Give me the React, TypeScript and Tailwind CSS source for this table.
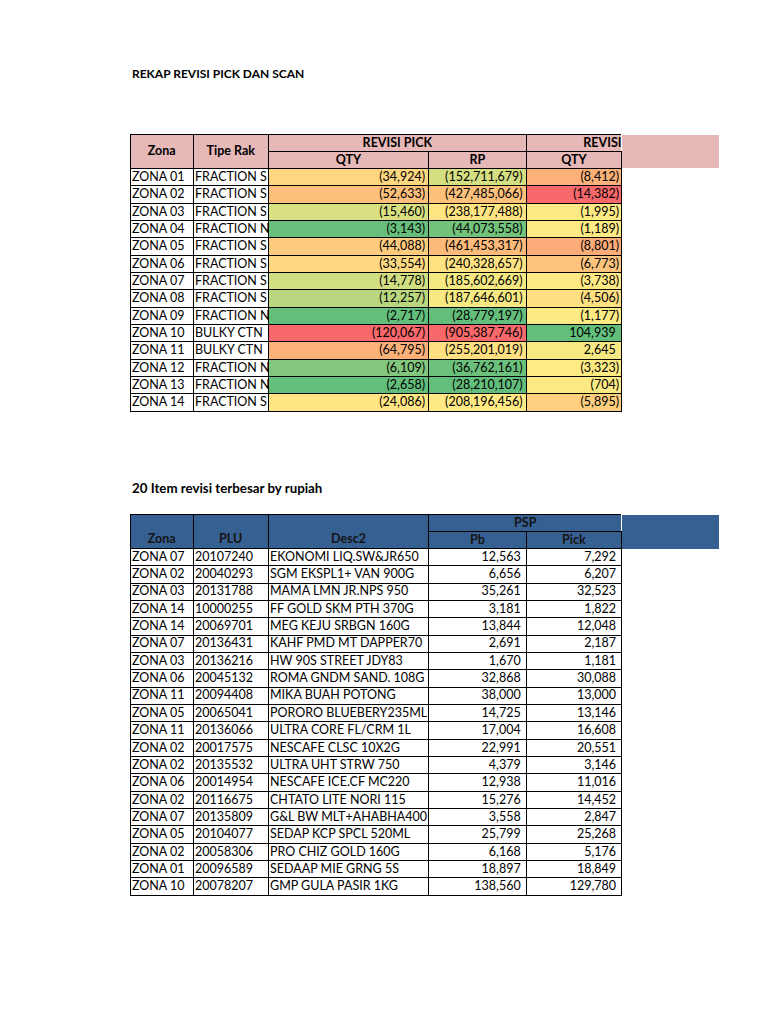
import type { CSSProperties } from 'react';

type RGB = [number, number, number];

const RED: RGB = [248, 105, 107];
const YELLOW: RGB = [255, 235, 132];
const GREEN: RGB = [99, 190, 123];

// skala warna 3 titik ala Excel (min merah, median kuning, max hijau)
function colorScale(values: number[]) {
  const sorted = [...values].sort((a, b) => a - b);
  const pos = (sorted.length - 1) * 0.5;
  const lo = Math.floor(pos);
  const hi = Math.ceil(pos);
  const mid = sorted[lo] + (sorted[hi] - sorted[lo]) * (pos - lo);
  const min = sorted[0];
  const max = sorted[sorted.length - 1];

  return (v: number): CSSProperties => {
    let a = RED;
    let b = YELLOW;
    let t = (v - min) / (mid - min);
    if (v > mid) {
      a = YELLOW;
      b = GREEN;
      t = (v - mid) / (max - mid);
    }
    const c = a.map((x, i) => Math.round(x + (b[i] - x) * t));
    return { backgroundColor: `rgb(${c[0]}, ${c[1]}, ${c[2]})` };
  };
}

const fmt = (n: number) => Math.abs(n).toLocaleString('en-US');

function Acc({ value }: { value: number }) {
  if (value < 0) return <>({fmt(value)})</>;
  return (
    <>
      {fmt(value)}
      <span className="invisible">)</span>
    </>
  );
}

const rekap: { zona: string; rak: string; qty: number; rp: number; scan: number }[] = [
  { zona: 'ZONA 01', rak: 'FRACTION S', qty: -34924, rp: -152711679, scan: -8412 },
  { zona: 'ZONA 02', rak: 'FRACTION S', qty: -52633, rp: -427485066, scan: -14382 },
  { zona: 'ZONA 03', rak: 'FRACTION S', qty: -15460, rp: -238177488, scan: -1995 },
  { zona: 'ZONA 04', rak: 'FRACTION N', qty: -3143, rp: -44073558, scan: -1189 },
  { zona: 'ZONA 05', rak: 'FRACTION S', qty: -44088, rp: -461453317, scan: -8801 },
  { zona: 'ZONA 06', rak: 'FRACTION S', qty: -33554, rp: -240328657, scan: -6773 },
  { zona: 'ZONA 07', rak: 'FRACTION S', qty: -14778, rp: -185602669, scan: -3738 },
  { zona: 'ZONA 08', rak: 'FRACTION S', qty: -12257, rp: -187646601, scan: -4506 },
  { zona: 'ZONA 09', rak: 'FRACTION N', qty: -2717, rp: -28779197, scan: -1177 },
  { zona: 'ZONA 10', rak: 'BULKY CTN', qty: -120067, rp: -905387746, scan: 104939 },
  { zona: 'ZONA 11', rak: 'BULKY CTN', qty: -64795, rp: -255201019, scan: 2645 },
  { zona: 'ZONA 12', rak: 'FRACTION N', qty: -6109, rp: -36762161, scan: -3323 },
  { zona: 'ZONA 13', rak: 'FRACTION N', qty: -2658, rp: -28210107, scan: -704 },
  { zona: 'ZONA 14', rak: 'FRACTION S', qty: -24086, rp: -208196456, scan: -5895 },
];

const items: [string, string, string, number, number][] = [
  ['ZONA 07', '20107240', 'EKONOMI LIQ.SW&JR650', 12563, 7292],
  ['ZONA 02', '20040293', 'SGM EKSPL1+ VAN 900G', 6656, 6207],
  ['ZONA 03', '20131788', 'MAMA LMN JR.NPS 950', 35261, 32523],
  ['ZONA 14', '10000255', 'FF GOLD SKM PTH 370G', 3181, 1822],
  ['ZONA 14', '20069701', 'MEG KEJU SRBGN 160G', 13844, 12048],
  ['ZONA 07', '20136431', 'KAHF PMD MT DAPPER70', 2691, 2187],
  ['ZONA 03', '20136216', 'HW 90S STREET JDY83', 1670, 1181],
  ['ZONA 06', '20045132', 'ROMA GNDM SAND. 108G', 32868, 30088],
  ['ZONA 11', '20094408', 'MIKA BUAH POTONG', 38000, 13000],
  ['ZONA 05', '20065041', 'PORORO BLUEBERY235ML', 14725, 13146],
  ['ZONA 11', '20136066', 'ULTRA CORE FL/CRM 1L', 17004, 16608],
  ['ZONA 02', '20017575', 'NESCAFE CLSC 10X2G', 22991, 20551],
  ['ZONA 02', '20135532', 'ULTRA UHT STRW 750', 4379, 3146],
  ['ZONA 06', '20014954', 'NESCAFE ICE.CF MC220', 12938, 11016],
  ['ZONA 02', '20116675', 'CHTATO LITE NORI 115', 15276, 14452],
  ['ZONA 07', '20135809', 'G&L BW MLT+AHABHA400', 3558, 2847],
  ['ZONA 05', '20104077', 'SEDAP KCP SPCL 520ML', 25799, 25268],
  ['ZONA 02', '20058306', 'PRO CHIZ GOLD 160G', 6168, 5176],
  ['ZONA 01', '20096589', 'SEDAAP MIE GRNG 5S', 18897, 18849],
  ['ZONA 10', '20078207', 'GMP GULA PASIR 1KG', 138560, 129780],
];

const qtyColor = colorScale(rekap.map((r) => r.qty));
const rpColor = colorScale(rekap.map((r) => r.rp));
const scanColor = colorScale(rekap.map((r) => r.scan));

const cell = 'border border-black p-0 leading-none whitespace-nowrap overflow-hidden';

export default function App() {
  return (
    <div className="min-h-[1024px] w-[768px] bg-white pl-[130px] pt-[66px] text-[12.5px] text-black font-['Lato','Carlito','Liberation_Sans',sans-serif]">
      <h1 className="pl-[2px] text-[12px] font-bold leading-[15px]">REKAP REVISI PICK DAN SCAN</h1>

      {/* rekap per zona */}
      <div className="mt-[53px] flex items-start">
        <table className="w-[491px] table-fixed border-collapse">
          <colgroup>
            <col className="w-[62.5px]" />
            <col className="w-[75.5px]" />
            <col className="w-[160px]" />
            <col className="w-[97.7px]" />
            <col className="w-[95.3px]" />
          </colgroup>
          <thead className="bg-[#e6b8b7] text-[12.5px] font-bold">
            <tr className="h-[17px]">
              <th rowSpan={2} className={cell}>Zona</th>
              <th rowSpan={2} className={cell}>Tipe Rak</th>
              <th colSpan={2} className={cell}>REVISI PICK</th>
              <th className={`${cell} border-r-0 text-right`}>REVISI</th>
            </tr>
            <tr className="h-[17px]">
              <th className={cell}>QTY</th>
              <th className={cell}>RP</th>
              <th className={cell}>QTY</th>
            </tr>
          </thead>
          <tbody>
            {rekap.map((r) => (
              <tr key={r.zona} className="h-[17.35px]">
                <td className={`${cell} pl-[1px]`}>{r.zona}</td>
                <td className={`${cell} pl-[1.5px]`}>{r.rak}</td>
                <td className={`${cell} pr-[3px] text-right`} style={qtyColor(r.qty)}>
                  <Acc value={r.qty} />
                </td>
                <td className={`${cell} pr-[3px] text-right`} style={rpColor(r.rp)}>
                  <Acc value={r.rp} />
                </td>
                <td className={`${cell} pr-[2px] text-right`} style={scanColor(r.scan)}>
                  <Acc value={r.scan} />
                </td>
              </tr>
            ))}
          </tbody>
        </table>
        <div className="mt-[1px] h-[33px] w-[97px] bg-[#e6b8b7]" />
      </div>

      <h2 className="mt-[68px] pl-[2px] text-[13.3px] font-bold leading-[16px]">20 Item revisi terbesar by rupiah</h2>

      {/* 20 item terbesar */}
      <div className="mt-[18px] flex items-start">
        <table className="w-[491px] table-fixed border-collapse">
          <colgroup>
            <col className="w-[62.5px]" />
            <col className="w-[75.5px]" />
            <col className="w-[160px]" />
            <col className="w-[97.7px]" />
            <col className="w-[95.3px]" />
          </colgroup>
          <thead className="bg-[#366092] text-[12.5px] font-bold text-[#141414]">
            <tr className="h-[17px]">
              <th rowSpan={2} className={`${cell} pb-[2px] align-bottom`}>Zona</th>
              <th rowSpan={2} className={`${cell} pb-[2px] align-bottom`}>PLU</th>
              <th rowSpan={2} className={`${cell} pb-[2px] align-bottom`}>Desc2</th>
              <th colSpan={2} className={`${cell} border-r-0`}>PSP</th>
            </tr>
            <tr className="h-[17px]">
              <th className={cell}>Pb</th>
              <th className={cell}>Pick</th>
            </tr>
          </thead>
          <tbody>
            {items.map(([zona, plu, desc, pb, pick], i) => (
              <tr key={i} className="h-[17.35px]">
                <td className={`${cell} pl-[1px]`}>{zona}</td>
                <td className={`${cell} pl-[1.5px]`}>{plu}</td>
                <td className={`${cell} pl-[1px]`}>{desc}</td>
                <td className={`${cell} pr-[5px] text-right`}>{fmt(pb)}</td>
                <td className={`${cell} pr-[5px] text-right`}>{fmt(pick)}</td>
              </tr>
            ))}
          </tbody>
        </table>
        <div className="mt-[1px] h-[34px] w-[97px] bg-[#366092]" />
      </div>
    </div>
  );
}
